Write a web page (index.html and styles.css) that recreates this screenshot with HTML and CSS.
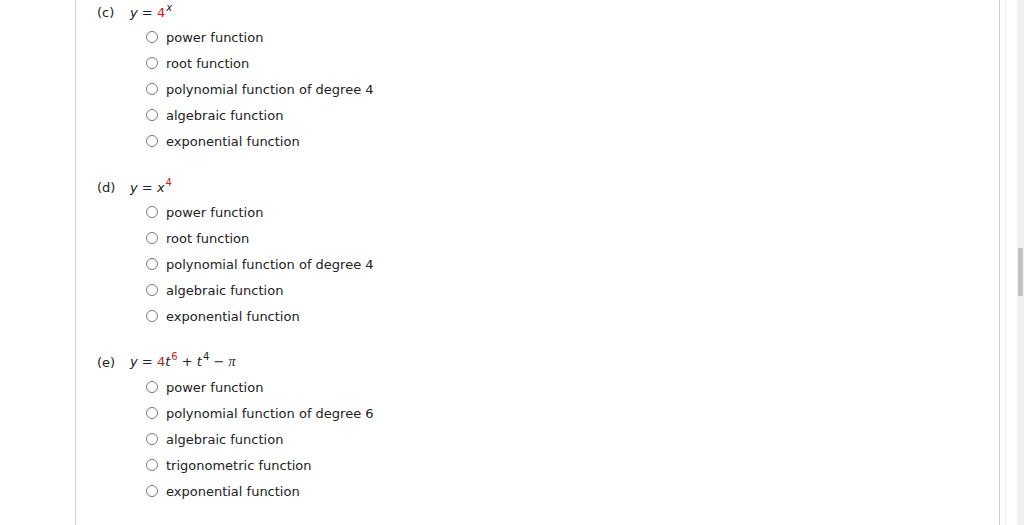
FILE: index.html
```html
<!DOCTYPE html>
<html lang="en">
<head>
  <meta charset="UTF-8">
  <title>Classify the functions</title>
  <link rel="stylesheet" href="styles.css">
</head>
<body>
  <div class="page">
    <div class="panel">

      <div class="question">
        <div class="q-head">
          <span class="q-label">(c)</span>
          <span class="math"><i>y</i> = <span class="red">4</span><sup><i>x</i></sup></span>
        </div>
        <ul class="options">
          <li><label><input type="radio" name="qc"> power function</label></li>
          <li><label><input type="radio" name="qc"> root function</label></li>
          <li><label><input type="radio" name="qc"> polynomial function of degree 4</label></li>
          <li><label><input type="radio" name="qc"> algebraic function</label></li>
          <li><label><input type="radio" name="qc"> exponential function</label></li>
        </ul>
      </div>

      <div class="question">
        <div class="q-head">
          <span class="q-label">(d)</span>
          <span class="math"><i>y</i> = <i>x</i><sup class="red">4</sup></span>
        </div>
        <ul class="options">
          <li><label><input type="radio" name="qd"> power function</label></li>
          <li><label><input type="radio" name="qd"> root function</label></li>
          <li><label><input type="radio" name="qd"> polynomial function of degree 4</label></li>
          <li><label><input type="radio" name="qd"> algebraic function</label></li>
          <li><label><input type="radio" name="qd"> exponential function</label></li>
        </ul>
      </div>

      <div class="question">
        <div class="q-head">
          <span class="q-label">(e)</span>
          <span class="math"><i>y</i> = <span class="red">4</span><i>t</i><sup class="red">6</sup> + <i>t</i><sup>4</sup> &minus; <i class="pi">&pi;</i></span>
        </div>
        <ul class="options">
          <li><label><input type="radio" name="qe"> power function</label></li>
          <li><label><input type="radio" name="qe"> polynomial function of degree 6</label></li>
          <li><label><input type="radio" name="qe"> algebraic function</label></li>
          <li><label><input type="radio" name="qe"> trigonometric function</label></li>
          <li><label><input type="radio" name="qe"> exponential function</label></li>
        </ul>
      </div>

    </div>
    <div class="gutter"></div>
    <div class="scrollbar"><div class="thumb"></div></div>
  </div>
</body>
</html>
```
FILE: styles.css
```css
body {
  margin: 0;
  background: #fff;
  font-family: "DejaVu Sans", Verdana, sans-serif;
  font-size: 13px;
  color: #222;
}
.page {
  display: flex;
  height: 525px;
  overflow: hidden;
}
.panel {
  margin-left: 75px;
  width: 924px;
  border-left: 1px solid #ccc;
  border-right: 1px solid #ccc;
  padding-left: 21px;
  box-sizing: border-box;
  width: 926px;
}
.gutter {
  width: 5px;
  border-right: 1px solid #f3f3f3;
}
.scrollbar {
  margin-left: 11px;
  width: 7px;
  background: #f0f0f0;
  padding-top: 248px;
}
.thumb {
  margin-left: 1px;
  width: 5px;
  height: 48px;
  background: #c1c1c1;
}
.question {
  margin-bottom: 21px;
}
.q-head {
  display: flex;
  align-items: center;
  height: 24px;
}
.q-label {
  width: 33px;
}
.math i {
  font-style: italic;
}
.math sup {
  font-size: 10px;
  vertical-align: 6px;
  line-height: 0;
  margin-left: 1px;
}
.math .pi {
  font-family: "Liberation Serif", serif;
  font-size: 14px;
}
.red {
  color: #d0191f;
}
.options {
  list-style: none;
  margin: 0;
  padding: 0 0 0 49px;
}
.options li {
  height: 26px;
  display: flex;
  align-items: center;
}
.options label {
  display: flex;
  align-items: center;
}
.options input {
  appearance: none;
  -webkit-appearance: none;
  width: 12px;
  height: 12px;
  margin: 0 8px 0 0;
  border: 1px solid #7a7a7a;
  border-radius: 50%;
  background: #fff;
  box-sizing: border-box;
}
```
